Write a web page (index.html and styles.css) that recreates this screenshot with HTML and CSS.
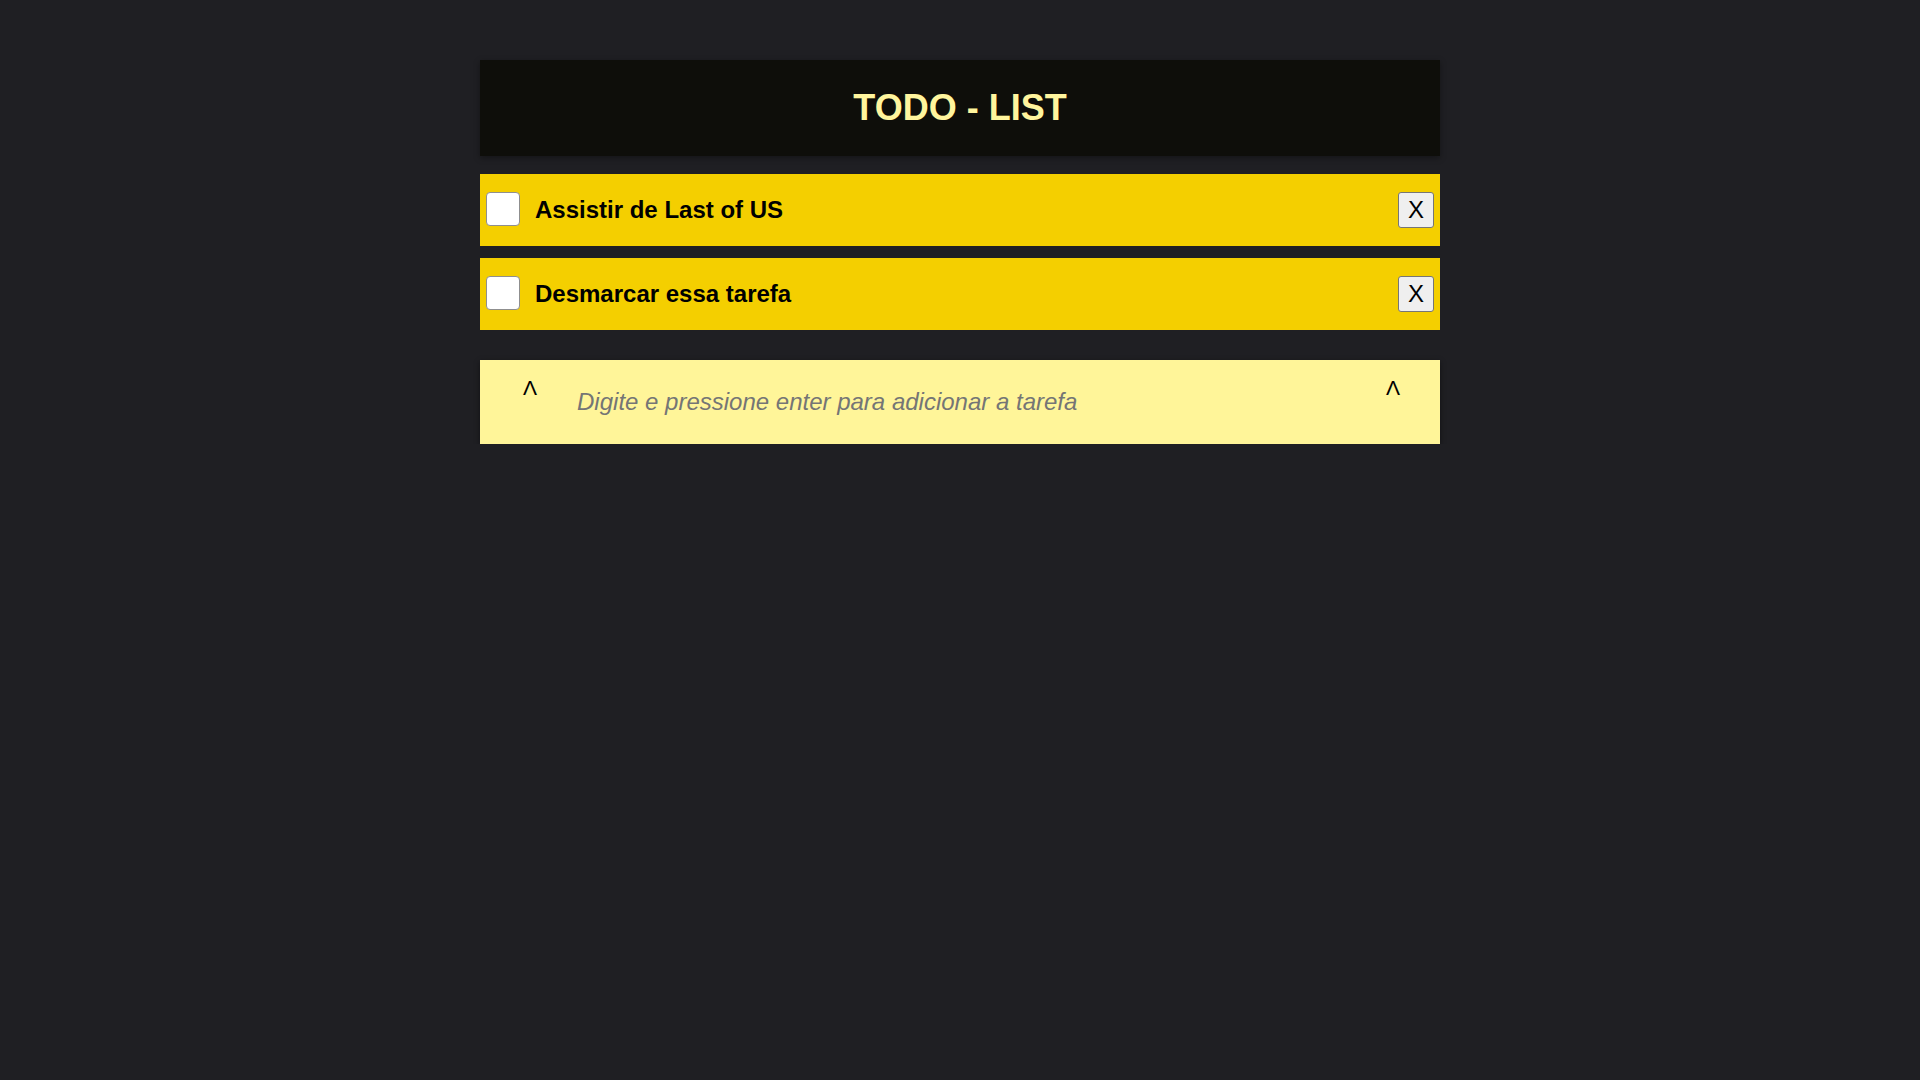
FILE: index.html
```html
<!DOCTYPE html>
<html lang="pt-BR">
<head>
<meta charset="utf-8">
<title>TODO - LIST</title>
<link rel="stylesheet" href="styles.css">
</head>
<body>
<main class="app">
  <header class="app-header">
    <h1 class="app-title">TODO - LIST</h1>
  </header>
  <ul class="todo-list">
    <li class="todo-item">
      <input type="checkbox" class="todo-check">
      <span class="todo-text">Assistir de Last of US</span>
      <button class="todo-remove">X</button>
    </li>
    <li class="todo-item">
      <input type="checkbox" class="todo-check">
      <span class="todo-text">Desmarcar essa tarefa</span>
      <button class="todo-remove">X</button>
    </li>
  </ul>
  <form class="todo-form">
    <span class="caret">Λ</span>
    <input type="text" class="todo-input" placeholder="Digite e pressione enter para adicionar a tarefa">
    <span class="caret">Λ</span>
  </form>
</main>
</body>
</html>
```
FILE: styles.css
```css
* { box-sizing: border-box; }

html, body {
  margin: 0;
  padding: 0;
  background: #1f1f23;
  font-family: "Liberation Sans", Arial, sans-serif;
}

.app {
  width: 960px;
  margin: 60px auto 0;
}

.app-header {
  height: 96px;
  background: #0e0e0a;
  display: flex;
  align-items: center;
  justify-content: center;
  box-shadow: 0 2px 6px rgba(0, 0, 0, 0.35);
}

.app-title {
  margin: 0;
  font-size: 36px;
  font-weight: bold;
  color: #fff59d;
}

.todo-list {
  list-style: none;
  margin: 18px 0 0;
  padding: 0;
  display: flex;
  flex-direction: column;
  gap: 12px;
}

.todo-item {
  height: 72px;
  background: #f4cf00;
  display: flex;
  align-items: center;
  padding: 0 6px;
}

.todo-check {
  appearance: none;
  -webkit-appearance: none;
  width: 34px;
  height: 34px;
  margin: 0 15px 2px 0;
  background: #ffffff;
  border: 1px solid #8f8f8f;
  border-radius: 4px;
  flex: none;
}

.todo-text {
  flex: 1;
  font-size: 24px;
  font-weight: bold;
  color: #000000;
}

.todo-remove {
  width: 36px;
  height: 36px;
  padding: 0;
  background: #efefef;
  border: 1px solid #767676;
  border-radius: 3px;
  font-family: "Liberation Sans", Arial, sans-serif;
  font-size: 24px;
  color: #000000;
  flex: none;
}

.todo-form {
  margin-top: 30px;
  height: 84px;
  background: #fff599;
  display: flex;
  align-items: flex-start;
  padding: 0 40px 0 43px;
  box-shadow: 0 2px 6px rgba(0, 0, 0, 0.45);
}

.caret {
  font-size: 21px;
  line-height: 1;
  margin-top: 17px;
  color: #000000;
  flex: none;
}

.todo-input {
  flex: 1;
  align-self: center;
  margin-left: 40px;
  padding: 0;
  border: none;
  outline: none;
  background: transparent;
  font-family: "Liberation Sans", Arial, sans-serif;
  font-size: 24px;
  color: #333333;
}

.todo-input::placeholder {
  color: #757575;
  font-style: italic;
}
```
